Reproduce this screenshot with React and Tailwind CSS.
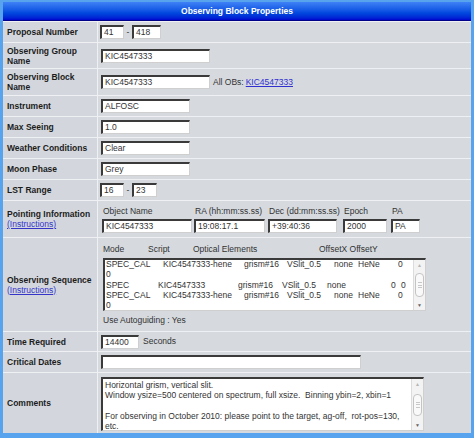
import React from "react";

const Inp = ({ w, v = "", cls = "" }) => (
  <div
    className={`h-[14px] ${w} shrink-0 bg-white border-t-2 border-l-2 border-t-[#3a3a3a] border-l-[#3a3a3a] border-r border-b border-r-[#cfcfcf] border-b-[#cfcfcf] pl-[2px] text-[8.5px] leading-[11px] text-[#333] whitespace-nowrap overflow-hidden ${cls}`}
  >
    {v}
  </div>
);

function Row({ h, label, children, vcls = "items-center pl-[3px]" }) {
  return (
    <div className={`flex gap-px ${h}`}>
      <div className="w-[94px] shrink-0 bg-[#d3d7dd] flex flex-col justify-center pl-[4px] font-bold text-[#1c1c1c] leading-[10px]">
        {label}
      </div>
      <div className={`flex-1 bg-[#d6dadf] flex ${vcls}`}>{children}</div>
    </div>
  );
}

const Instr = () => (
  <span className="font-normal text-[#3535c8] underline">(Instructions)</span>
);

function ScrollBar({ thumbH }) {
  return (
    <div className="w-[12px] shrink-0 h-full bg-[#f3f3f3] border-l border-[#dcdcdc] flex flex-col items-center justify-between py-[2px]">
      <span className="text-[5px] leading-[6px] text-[#b5b5b5]">▲</span>
      <div
        className={`w-[9px] ${thumbH} rounded-[4px] border border-[#c4c4c4] bg-[#f9f9f9] flex flex-col items-center justify-center gap-[1.5px]`}
      >
        <div className="w-[4px] h-px bg-[#c8c8c8]" />
        <div className="w-[4px] h-px bg-[#c8c8c8]" />
        <div className="w-[4px] h-px bg-[#c8c8c8]" />
      </div>
      <span className="text-[5px] leading-[6px] text-[#666]">▼</span>
    </div>
  );
}

const SeqCal = () => (
  <div className="flex h-[10.25px] items-center">
    <span className="w-[57px]">SPEC_CAL</span>
    <span className="w-[81px]">KIC4547333-hene</span>
    <span className="w-[43px]">grism#16</span>
    <span className="w-[47px]">VSlit_0.5</span>
    <span className="w-[24px]">none</span>
    <span className="w-[40px]">HeNe</span>
    <span>0</span>
  </div>
);

export default function App() {
  return (
    <div className="w-[474px] h-[438px] overflow-hidden bg-[#57a3ee] pt-[2px] px-[3px] font-['Liberation_Sans',Arial,sans-serif] text-[8.5px]">
      <div className="flex flex-col gap-px bg-[#eef0f3]">
        <div className="h-[19px] bg-linear-to-b from-[#3f82f6] to-[#0000cf] border-b border-[#00008a] flex items-center justify-center text-white font-bold">
          Observing Block Properties
        </div>

        <Row h="h-[20px]" label="Proposal Number" vcls="items-center pl-[2px]">
          <Inp w="w-[24px]" v="41" />
          <span className="w-[8px] text-center text-[#333]">-</span>
          <Inp w="w-[29px]" v="418" />
        </Row>

        <Row h="h-[25px]" label={<><span>Observing Group</span><span>Name</span></>}>
          <Inp w="w-[109px]" v="KIC4547333" />
        </Row>

        <Row h="h-[26px]" label={<><span>Observing Block</span><span>Name</span></>}>
          <Inp w="w-[109px]" v="KIC4547333" />
          <span className="ml-[3px] text-[#333]">All OBs: </span>
          <span className="ml-[2px] text-[#3030d0] underline">KIC4547333</span>
        </Row>

        <Row h="h-[20px]" label="Instrument">
          <Inp w="w-[89px]" v="ALFOSC" />
        </Row>
        <Row h="h-[20px]" label="Max Seeing">
          <Inp w="w-[89px]" v="1.0" />
        </Row>
        <Row h="h-[20px]" label="Weather Conditions">
          <Inp w="w-[89px]" v="Clear" />
        </Row>
        <Row h="h-[20px]" label="Moon Phase">
          <Inp w="w-[89px]" v="Grey" />
        </Row>
        <Row h="h-[20px]" label="LST Range" vcls="items-center pl-[2px]">
          <Inp w="w-[24px]" v="16" />
          <span className="w-[8px] text-center text-[#333]">-</span>
          <Inp w="w-[25px]" v="23" />
        </Row>

        <Row
          h="h-[36px]"
          label={<><span>Pointing Information</span><Instr /></>}
          vcls="items-start pl-[4px] pt-[5px]"
        >
          <div className="flex text-[#333]">
            {[
              ["w-[92px]", "w-[90px]", "Object Name", "KIC4547333"],
              ["w-[74px]", "w-[71px]", "RA (hh:mm:ss.ss)", "19:08:17.1"],
              ["w-[75px]", "w-[69px]", "Dec (dd:mm:ss.ss)", "+39:40:36"],
              ["w-[48px]", "w-[44px]", "Epoch", "2000"],
              ["w-[30px]", "w-[29px]", "PA", "PA"],
            ].map(([cw, iw, h, v]) => (
              <div key={h} className={`${cw} flex flex-col gap-[3px]`}>
                <div className="h-[10px] leading-[10px] pl-px whitespace-nowrap">{h}</div>
                <Inp w={iw} v={v} />
              </div>
            ))}
          </div>
        </Row>

        <Row
          h="h-[93px]"
          label={<><span>Observing Sequence</span><Instr /></>}
          vcls="items-start pl-[5px] pt-[6px]"
        >
          <div className="flex flex-col text-[#333]">
            <div className="flex h-[10px] leading-[10px]">
              <span className="w-[45px]">Mode</span>
              <span className="w-[45px]">Script</span>
              <span className="w-[126px]">Optical Elements</span>
              <span>OffsetX OffsetY</span>
            </div>
            <div className="mt-[4px] w-[323px] h-[53px] bg-white border-t-2 border-l-2 border-t-[#3a3a3a] border-l-[#3a3a3a] border-r border-b border-r-[#cfcfcf] border-b-[#cfcfcf] flex overflow-hidden">
              <div className="flex-1 pl-[1px] -mt-[1px] leading-[10px] whitespace-nowrap overflow-hidden">
                <SeqCal />
                <div className="h-[10.25px] flex items-center">0</div>
                <div className="flex h-[10.25px] items-center">
                  <span className="w-[52px]">SPEC</span>
                  <span className="w-[80px]">KIC4547333</span>
                  <span className="w-[44px]">grism#16</span>
                  <span className="w-[45px]">VSlit_0.5</span>
                  <span className="w-[64px]">none</span>
                  <span className="w-[10px]">0</span>
                  <span>0</span>
                </div>
                <SeqCal />
                <div className="h-[10.25px] flex items-center">0</div>
              </div>
              <ScrollBar thumbH="h-[24px]" />
            </div>
            <div className="mt-[4px] h-[10px] leading-[10px]">Use Autoguiding : Yes</div>
          </div>
        </Row>

        <Row h="h-[19px]" label="Time Required">
          <Inp w="w-[38px]" v="14400" />
          <span className="ml-[4px] text-[#333]">Seconds</span>
        </Row>

        <Row h="h-[20px]" label="Critical Dates">
          <Inp w="w-[260px]" v="" />
        </Row>

        <Row h="h-[60px]" label="Comments" vcls="items-start pl-[3px] pt-[4px]">
          <div className="w-[323px] h-[54px] bg-white border-t-2 border-l-2 border-t-[#3a3a3a] border-l-[#3a3a3a] border-r border-b border-r-[#cfcfcf] border-b-[#cfcfcf] flex text-[#333]">
            <div className="flex-1 pl-[2px] pt-px leading-[10.2px] whitespace-pre overflow-hidden">
              <div>Horizontal grism, vertical slit.</div>
              <div>Window ysize=500 centered on spectrum, full xsize.  Binning ybin=2, xbin=1</div>
              <div>&nbsp;</div>
              <div>For observing in October 2010: please point to the target, ag-off,  rot-pos=130,</div>
              <div>etc.</div>
            </div>
            <ScrollBar thumbH="h-[22px]" />
          </div>
        </Row>
      </div>
    </div>
  );
}
